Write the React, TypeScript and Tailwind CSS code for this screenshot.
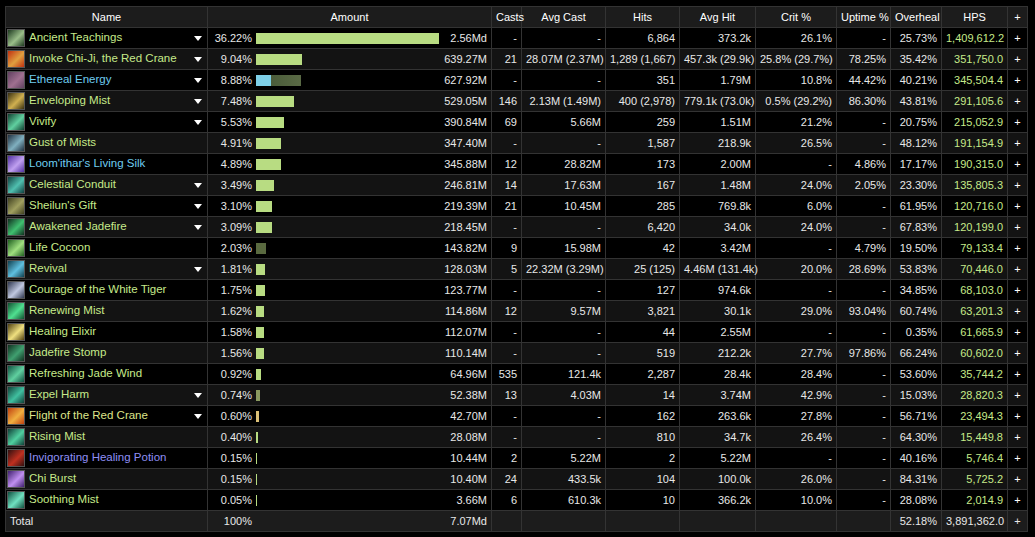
import React from "react";

type R = { n: string; c?: string; dd?: boolean; p: string; pv: number; a: string; casts: string; ac: string; hits: string; ah: string; crit: string; up: string; oh: string; hps: string; bc?: string; sec?: number; ic: string[] };

const G = "#c6ea8a";
const rows: R[] = [
  { n: "Ancient Teachings", dd: true, p: "36.22%", pv: 36.22, a: "2.56Md", casts: "-", ac: "-", hits: "6,864", ah: "373.2k", crit: "26.1%", up: "-", oh: "25.73%", hps: "1,409,612.2", ic: ["#1e3a20", "#9bbf8a"] },
  { n: "Invoke Chi-Ji, the Red Crane", dd: true, p: "9.04%", pv: 9.04, a: "639.27M", casts: "21", ac: "28.07M (2.37M)", hits: "1,289 (1,667)", ah: "457.3k (29.9k)", crit: "25.8% (29.7%)", up: "78.25%", oh: "35.42%", hps: "351,750.0", sec: 46, ic: ["#c03010", "#e0a040"] },
  { n: "Ethereal Energy", c: "#6fcdf0", dd: true, p: "8.88%", pv: 3, a: "627.92M", casts: "-", ac: "-", hits: "351", ah: "1.79M", crit: "10.8%", up: "44.42%", oh: "40.21%", hps: "345,504.4", bc: "#7ed0e8", sec: 45, ic: ["#604060", "#a07090"] },
  { n: "Enveloping Mist", dd: true, p: "7.48%", pv: 7.48, a: "529.05M", casts: "146", ac: "2.13M (1.49M)", hits: "400 (2,978)", ah: "779.1k (73.0k)", crit: "0.5% (29.2%)", up: "86.30%", oh: "43.81%", hps: "291,105.6", sec: 37, ic: ["#3a3010", "#d0b050"] },
  { n: "Vivify", dd: true, p: "5.53%", pv: 5.53, a: "390.84M", casts: "69", ac: "5.66M", hits: "259", ah: "1.51M", crit: "21.2%", up: "-", oh: "20.75%", hps: "215,052.9", ic: ["#104030", "#60d0a0"] },
  { n: "Gust of Mists", p: "4.91%", pv: 4.91, a: "347.40M", casts: "-", ac: "-", hits: "1,587", ah: "218.9k", crit: "26.5%", up: "-", oh: "48.12%", hps: "191,154.9", ic: ["#203040", "#80b0c0"] },
  { n: "Loom'ithar's Living Silk", c: "#6fcdf0", p: "4.89%", pv: 4.89, a: "345.88M", casts: "12", ac: "28.82M", hits: "173", ah: "2.00M", crit: "-", up: "4.86%", oh: "17.17%", hps: "190,315.0", ic: ["#5030a0", "#c0a0f0"] },
  { n: "Celestial Conduit", dd: true, p: "3.49%", pv: 3.49, a: "246.81M", casts: "14", ac: "17.63M", hits: "167", ah: "1.48M", crit: "24.0%", up: "2.05%", oh: "23.30%", hps: "135,805.3", ic: ["#104040", "#50c0b0"] },
  { n: "Sheilun's Gift", dd: true, p: "3.10%", pv: 3.1, a: "219.39M", casts: "21", ac: "10.45M", hits: "285", ah: "769.8k", crit: "6.0%", up: "-", oh: "61.95%", hps: "120,716.0", ic: ["#404020", "#a0a060"] },
  { n: "Awakened Jadefire", dd: true, p: "3.09%", pv: 3.09, a: "218.45M", casts: "-", ac: "-", hits: "6,420", ah: "34.0k", crit: "24.0%", up: "-", oh: "67.83%", hps: "120,199.0", ic: ["#103020", "#40c070"] },
  { n: "Life Cocoon", p: "2.03%", pv: 2.03, a: "143.82M", casts: "9", ac: "15.98M", hits: "42", ah: "3.42M", crit: "-", up: "4.79%", oh: "19.50%", hps: "79,133.4", bc: "#5a6a40", ic: ["#206020", "#a0e080"] },
  { n: "Revival", dd: true, p: "1.81%", pv: 1.81, a: "128.03M", casts: "5", ac: "22.32M (3.29M)", hits: "25 (125)", ah: "4.46M (131.4k)", crit: "20.0%", up: "28.69%", oh: "53.83%", hps: "70,446.0", ic: ["#104050", "#60c0e0"] },
  { n: "Courage of the White Tiger", p: "1.75%", pv: 1.75, a: "123.77M", casts: "-", ac: "-", hits: "127", ah: "974.6k", crit: "-", up: "-", oh: "34.85%", hps: "68,103.0", ic: ["#303850", "#c0c8e0"] },
  { n: "Renewing Mist", p: "1.62%", pv: 1.62, a: "114.86M", casts: "12", ac: "9.57M", hits: "3,821", ah: "30.1k", crit: "29.0%", up: "93.04%", oh: "60.74%", hps: "63,201.3", ic: ["#105030", "#50e090"] },
  { n: "Healing Elixir", p: "1.58%", pv: 1.58, a: "112.07M", casts: "-", ac: "-", hits: "44", ah: "2.55M", crit: "-", up: "-", oh: "0.35%", hps: "61,665.9", ic: ["#504010", "#f0e080"] },
  { n: "Jadefire Stomp", p: "1.56%", pv: 1.56, a: "110.14M", casts: "-", ac: "-", hits: "519", ah: "212.2k", crit: "27.7%", up: "97.86%", oh: "66.24%", hps: "60,602.0", ic: ["#103020", "#40a070"] },
  { n: "Refreshing Jade Wind", p: "0.92%", pv: 0.92, a: "64.96M", casts: "535", ac: "121.4k", hits: "2,287", ah: "28.4k", crit: "28.4%", up: "-", oh: "53.60%", hps: "35,744.2", ic: ["#105040", "#60d0a0"] },
  { n: "Expel Harm", dd: true, p: "0.74%", pv: 0.74, a: "52.38M", casts: "13", ac: "4.03M", hits: "14", ah: "3.74M", crit: "42.9%", up: "-", oh: "15.03%", hps: "28,820.3", bc: "#8a9a60", ic: ["#104038", "#40c0a0"] },
  { n: "Flight of the Red Crane", c: "#dde58a", dd: true, p: "0.60%", pv: 0.6, a: "42.70M", casts: "-", ac: "-", hits: "162", ah: "263.6k", crit: "27.8%", up: "-", oh: "56.71%", hps: "23,494.3", bc: "#dcc078", ic: ["#c04010", "#f0b040"] },
  { n: "Rising Mist", p: "0.40%", pv: 0.4, a: "28.08M", casts: "-", ac: "-", hits: "810", ah: "34.7k", crit: "26.4%", up: "-", oh: "64.30%", hps: "15,449.8", ic: ["#104038", "#50d0a0"] },
  { n: "Invigorating Healing Potion", c: "#8f8ff5", p: "0.15%", pv: 0.15, a: "10.44M", casts: "2", ac: "5.22M", hits: "2", ah: "5.22M", crit: "-", up: "-", oh: "40.16%", hps: "5,746.4", ic: ["#301010", "#c03020"] },
  { n: "Chi Burst", p: "0.15%", pv: 0.15, a: "10.40M", casts: "24", ac: "433.5k", hits: "104", ah: "100.0k", crit: "26.0%", up: "-", oh: "84.31%", hps: "5,725.2", ic: ["#402070", "#c090f0"] },
  { n: "Soothing Mist", p: "0.05%", pv: 0.05, a: "3.66M", casts: "6", ac: "610.3k", hits: "10", ah: "366.2k", crit: "10.0%", up: "-", oh: "28.08%", hps: "2,014.9", ic: ["#105040", "#70e0c0"] },
];

const widths = [202, 284, 30, 84, 74, 76, 81, 54, 51, 66, 20];
const td = "border border-[#333] px-[4px] whitespace-nowrap";

function Caret() {
  return <svg width="8" height="5" viewBox="0 0 8 5" className="shrink-0"><path d="M0 0H8L4 5Z" fill="#fff" /></svg>;
}

export default function App() {
  return (
    <div className="w-[1035px] h-[537px] bg-black pt-[6px] pl-[5px]" style={{ fontFamily: '"Liberation Sans", Arial, sans-serif' }}>
      <table className="border-collapse table-fixed text-[11px] text-[#e8e8e8]" style={{ width: 1022 }}>
        <colgroup>{widths.map((w, i) => <col key={i} style={{ width: w }} />)}</colgroup>
        <thead>
          <tr className="h-[21px] bg-[#1c1c1c] text-white">
            {["Name", "Amount", "Casts", "Avg Cast", "Hits", "Avg Hit", "Crit %", "Uptime %", "Overheal", "HPS", "+"].map(h => (
              <th key={h} className={td + " font-normal text-center"}>{h}</th>
            ))}
          </tr>
        </thead>
        <tbody>
          {rows.map((r, i) => {
            const w = Math.max(1, Math.round((r.pv / 36.22) * 183));
            return (
              <tr key={r.n} className={"h-[21px] " + (i % 2 ? "bg-[#131313]" : "bg-black")}>
                <td className={td + " pl-[1px]"}>
                  <div className="flex items-center gap-[4px]">
                    <div className="w-[18px] h-[18px] border border-[#555] shrink-0" style={{ background: `linear-gradient(135deg, ${r.ic[0]}, ${r.ic[1]} 55%, ${r.ic[0]})` }} />
                    <span className="flex-1 truncate text-[11.5px]" style={{ color: r.c || G }}>{r.n}</span>
                    {r.dd && <span className="mr-[1px]"><Caret /></span>}
                  </div>
                </td>
                <td className={td}>
                  <div className="flex items-center">
                    <span className="w-[40px] text-right shrink-0">{r.p}</span>
                    <div className="ml-[4px] flex items-center h-[11px] w-[184px]">
                      <div className="h-full" style={{ width: w, background: r.bc || "#b8dc82" }} />
                      {r.sec && <div className="h-full" style={{ width: r.sec - w, background: "linear-gradient(90deg,#4a5c3a,#5a6a45)" }} />}
                    </div>
                    <span className="flex-1 text-right">{r.a}</span>
                  </div>
                </td>
                <td className={td + " text-right"}>{r.casts}</td>
                <td className={td + " text-right"}>{r.ac}</td>
                <td className={td + " text-right"}>{r.hits}</td>
                <td className={td + " text-right"}>{r.ah}</td>
                <td className={td + " text-right"}>{r.crit}</td>
                <td className={td + " text-right"}>{r.up}</td>
                <td className={td + " text-right"}>{r.oh}</td>
                <td className={td + " text-right text-[#c6ea8a]"}>{r.hps}</td>
                <td className={td + " text-center text-white"}>+</td>
              </tr>
            );
          })}
          <tr className="h-[21px] bg-[#1c1c1c]">
            <td className={td}>Total</td>
            <td className={td}>
              <div className="flex"><span className="w-[40px] text-right">100%</span><span className="flex-1 text-right">7.07Md</span></div>
            </td>
            <td className={td} /><td className={td} /><td className={td} /><td className={td} /><td className={td} /><td className={td} />
            <td className={td + " text-right"}>52.18%</td>
            <td className={td + " text-right"}>3,891,362.0</td>
            <td className={td + " text-center"}>+</td>
          </tr>
        </tbody>
      </table>
    </div>
  );
}
